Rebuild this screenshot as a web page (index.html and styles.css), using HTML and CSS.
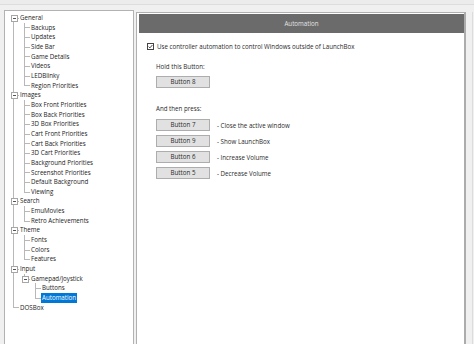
FILE: index.html
```html
<!DOCTYPE html>
<html lang="en">
<head>
  <meta charset="UTF-8" />
  <title>Options - Automation</title>
  <link rel="stylesheet" href="styles.css">
</head>
<body>

  <div class="topbar"></div>

  <div class="main">

    <!-- Options tree -->
    <div class="tree-panel">
      <ul class="tree">
        <li><span class="toggle"></span><span class="label">General</span>
          <ul>
            <li><span class="label">Backups</span></li>
            <li><span class="label">Updates</span></li>
            <li><span class="label">Side Bar</span></li>
            <li><span class="label">Game Details</span></li>
            <li><span class="label">Videos</span></li>
            <li><span class="label">LEDBlinky</span></li>
            <li><span class="label">Region Priorities</span></li>
          </ul>
        </li>
        <li><span class="toggle"></span><span class="label">Images</span>
          <ul>
            <li><span class="label">Box Front Priorities</span></li>
            <li><span class="label">Box Back Priorities</span></li>
            <li><span class="label">3D Box Priorities</span></li>
            <li><span class="label">Cart Front Priorities</span></li>
            <li><span class="label">Cart Back Priorities</span></li>
            <li><span class="label">3D Cart Priorities</span></li>
            <li><span class="label">Background Priorities</span></li>
            <li><span class="label">Screenshot Priorities</span></li>
            <li><span class="label">Default Background</span></li>
            <li><span class="label">Viewing</span></li>
          </ul>
        </li>
        <li><span class="toggle"></span><span class="label">Search</span>
          <ul>
            <li><span class="label">EmuMovies</span></li>
            <li><span class="label">Retro Achievements</span></li>
          </ul>
        </li>
        <li><span class="toggle"></span><span class="label">Theme</span>
          <ul>
            <li><span class="label">Fonts</span></li>
            <li><span class="label">Colors</span></li>
            <li><span class="label">Features</span></li>
          </ul>
        </li>
        <li><span class="toggle"></span><span class="label">Input</span>
          <ul>
            <li><span class="toggle"></span><span class="label">Gamepad/Joystick</span>
              <ul>
                <li><span class="label">Buttons</span></li>
                <li><span class="label selected">Automation</span></li>
              </ul>
            </li>
          </ul>
        </li>
        <li><span class="label">DOSBox</span></li>
      </ul>
    </div>

    <!-- Settings page -->
    <div class="settings">
      <div class="panel-head">Automation</div>
      <div class="panel-body">
        <label class="check">
          <svg class="checkbox" width="7" height="7" viewBox="0 0 7 7">
            <rect x="0.5" y="0.5" width="6" height="6" fill="#fff" stroke="#444"/>
            <polyline points="1.6,3.6 2.9,4.9 5.4,2" fill="none" stroke="#333" stroke-width="0.9"/>
          </svg>
          Use controller automation to control Windows outside of LaunchBox
        </label>

        <div class="group">
          <div class="caption">Hold this Button:</div>
          <div class="btn">Button 8</div>

          <div class="caption then">And then press:</div>
          <div class="actions">
            <div class="action"><span class="btn">Button 7</span><span>- Close the active window</span></div>
            <div class="action"><span class="btn">Button 9</span><span>- Show LaunchBox</span></div>
            <div class="action"><span class="btn">Button 6</span><span>- Increase Volume</span></div>
            <div class="action"><span class="btn">Button 5</span><span>- Decrease Volume</span></div>
          </div>
        </div>
      </div>
    </div>

    <div class="edge"></div>
  </div>

</body>
</html>
```

FILE: styles.css
```css
* {
  box-sizing: border-box;
}

html, body {
  height: 100%;
}

body {
  margin: 0;
  overflow: hidden;
  background: #f0f0f0;
  font-family: 'Open Sans', 'Noto Sans', sans-serif;
  font-size: 6.2px;
  color: #2a2a2a;
}

.topbar {
  height: 5px;
  background: #ececec;
  border-bottom: 1px solid #dddddd;
}

.main {
  display: flex;
  padding: 5px 0 0 4px;
  gap: 2px;
  height: calc(100% - 5px);
}

/* tree */

.tree-panel {
  width: 130px;
  height: 100%;
  background: #fff;
  border: 1px solid #b2b2b2;
  border-bottom: none;
  padding-top: 2px;
}

.tree, .tree ul {
  list-style: none;
  margin: 0;
  padding: 0;
}

.tree ul {
  margin-left: -4px;
}

.tree li {
  position: relative;
  padding-left: 15px;
}

.tree li::before {
  content: "";
  position: absolute;
  left: 8px;
  top: 0;
  bottom: 0;
  border-left: 1px solid #b8b8b8;
}

.tree > li:first-child::before {
  top: 4.8px;
}

.tree li:last-child::before {
  bottom: auto;
  height: 4.8px;
}

.tree li::after {
  content: "";
  position: absolute;
  left: 8px;
  top: 4.8px;
  width: 6px;
  border-top: 1px solid #b8b8b8;
}

.toggle {
  position: absolute;
  z-index: 1;
  left: 6px;
  top: 1.8px;
  width: 7px;
  height: 7px;
  border: 1px solid #a6a6a6;
  background: linear-gradient(#555, #555) center / 3px 1px no-repeat, #fff;
}

.label {
  display: block;
  width: fit-content;
  height: 9.667px;
  line-height: 9.667px;
  padding: 0 1px;
  margin-left: -1px;
  white-space: nowrap;
  color: #222;
}

.label.selected {
  background: #0078d7;
  color: #fff;
}

/* settings page */

.settings {
  width: 330px;
  height: 100%;
  margin-top: 2px;
  background: #fff;
  border: 1px solid #b0b0b0;
  border-right: 2px solid #acacac;
  border-bottom: none;
  padding: 1px 0 0 2px;
}

.panel-head {
  height: 19px;
  line-height: 19px;
  background: #6b6b6b;
  color: #e4e4e4;
  text-align: center;
}

.panel-body {
  padding: 8px 0 0 8px;
}

.check {
  display: flex;
  align-items: center;
  gap: 3px;
  height: 10px;
  white-space: nowrap;
}

.checkbox {
  display: block;
}

.group {
  margin-left: 9px;
}

.caption {
  height: 10px;
  line-height: 10px;
  margin-top: 11px;
}

.caption.then {
  margin-top: 16px;
}

.btn {
  display: block;
  width: 54px;
  height: 12px;
  line-height: 10px;
  margin-top: 4px;
  text-align: center;
  background: #e1e1e1;
  border: 1px solid #adadad;
}

.actions {
  display: flex;
  flex-direction: column;
  gap: 4px;
  margin-top: 5px;
}

.action {
  display: flex;
  align-items: center;
  gap: 7px;
}

.action .btn {
  margin-top: 0;
}

.edge {
  margin: 2px 0 0 4px;
  border-left: 1px solid #dcdcdc;
}
```
